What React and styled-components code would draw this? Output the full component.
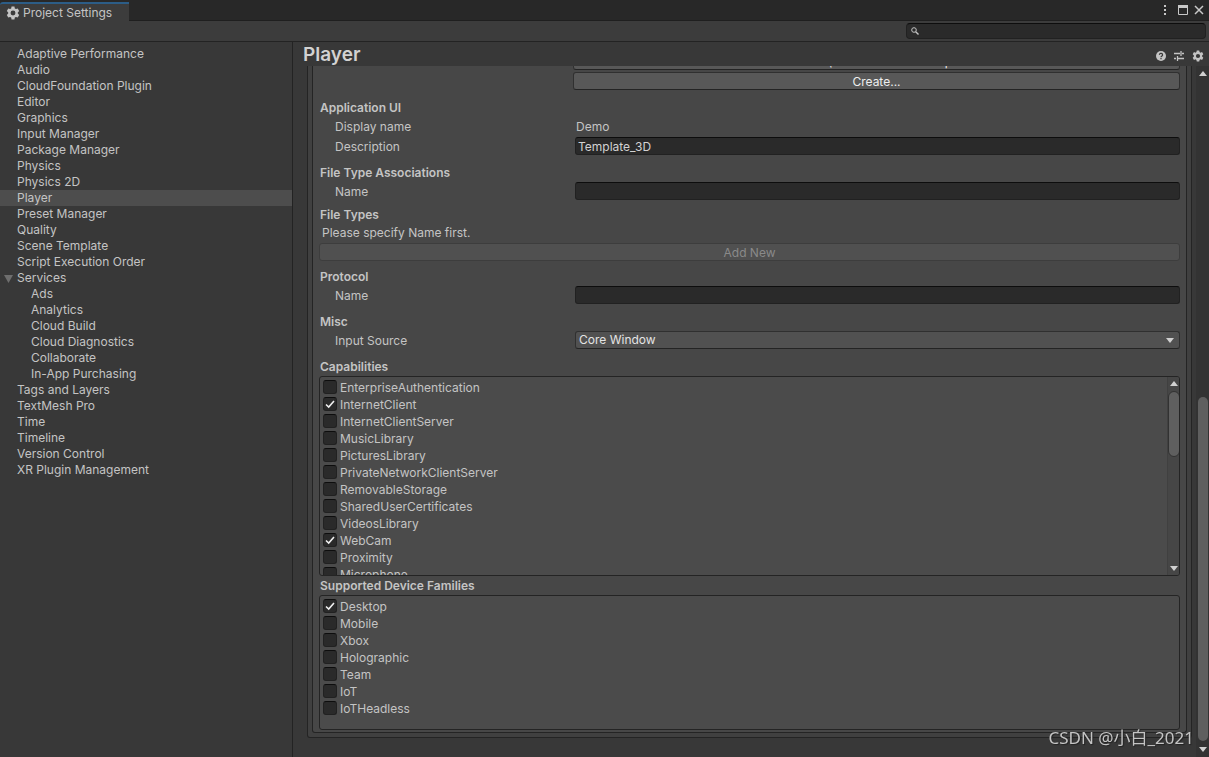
import { useState } from 'react';
import styled, { createGlobalStyle } from 'styled-components';

const navItems = [
  { name: 'Adaptive Performance' },
  { name: 'Audio' },
  { name: 'CloudFoundation Plugin' },
  { name: 'Editor' },
  { name: 'Graphics' },
  { name: 'Input Manager' },
  { name: 'Package Manager' },
  { name: 'Physics' },
  { name: 'Physics 2D' },
  { name: 'Player' },
  { name: 'Preset Manager' },
  { name: 'Quality' },
  { name: 'Scene Template' },
  { name: 'Script Execution Order' },
  { name: 'Services', open: true },
  { name: 'Ads', child: true },
  { name: 'Analytics', child: true },
  { name: 'Cloud Build', child: true },
  { name: 'Cloud Diagnostics', child: true },
  { name: 'Collaborate', child: true },
  { name: 'In-App Purchasing', child: true },
  { name: 'Tags and Layers' },
  { name: 'TextMesh Pro' },
  { name: 'Time' },
  { name: 'Timeline' },
  { name: 'Version Control' },
  { name: 'XR Plugin Management' },
];

const capabilities = [
  'EnterpriseAuthentication',
  'InternetClient',
  'InternetClientServer',
  'MusicLibrary',
  'PicturesLibrary',
  'PrivateNetworkClientServer',
  'RemovableStorage',
  'SharedUserCertificates',
  'VideosLibrary',
  'WebCam',
  'Proximity',
  'Microphone',
];

const families = ['Desktop', 'Mobile', 'Xbox', 'Holographic', 'Team', 'IoT', 'IoTHeadless'];

const GearIcon = ({ size }) => (
  <svg width={size} height={size} viewBox="0 0 24 24" fill="#c4c4c4">
    <path
      fillRule="evenodd"
      d="M9.500 1h5l.6 3.200 2 1.100 3-1.200 2.500 4.300L20.200 11v2l2.400 2.600-2.500 4.300-3-1.200-2 1.100-.6 3.200h-5l-.6-3.200-2-1.100-3 1.200-2.500-4.300L3.800 13v-2L1.400 8.400l2.500-4.300 3 1.200 2-1.100zM12 7.800a4.200 4.200 0 1 0 0 8.400 4.200 4.200 0 0 0 0-8.400z"
    />
  </svg>
);

const Arrow = ({ down }) => (
  <svg width="8" height="5" viewBox="0 0 8 5">
    <path d={down ? 'M0 0h8L4 5z' : 'M0 5h8L4 0z'} fill="#d0d0d0" />
  </svg>
);

const CheckList = ({ items, defaultChecked }) => {
  const [checked, setChecked] = useState(defaultChecked);

  const toggle = (item) => {
    setChecked(
      checked.includes(item) ? checked.filter((c) => c !== item) : [...checked, item]
    );
  };

  return (
    <List>
      {items.map((item) => (
        <CheckRow key={item}>
          <Checkbox checked={checked.includes(item)} onChange={() => toggle(item)} />
          {item}
        </CheckRow>
      ))}
    </List>
  );
};

const Checkbox = ({ checked, onChange }) => (
  <CheckWrap>
    <CheckInput type="checkbox" checked={checked} onChange={onChange} />
    {checked && (
      <CheckMark viewBox="0 0 14 14">
        <path d="M3 7.500L5.700 10L11 4" fill="none" stroke="#efefef" strokeWidth="1.600" />
      </CheckMark>
    )}
  </CheckWrap>
);

const App = () => {
  const [active, setActive] = useState('Player');
  const [description, setDescription] = useState('Template_3D');

  return (
    <Window>
      <GlobalStyle />
      <TitleBar>
        <Tab>
          <GearIcon size={14} />
          Project Settings
        </Tab>
        <WindowButtons>
          <IconButton aria-label="Menu">
            <svg width="14" height="12" viewBox="0 0 14 12" fill="#c8c8c8">
              <path d="M6 1h2v2H6zM6 5h2v2H6zM6 9h2v2H6z" />
            </svg>
          </IconButton>
          <IconButton aria-label="Maximize">
            <svg width="10" height="10" viewBox="0 0 10 10">
              <path d="M.5.500h9v9h-9z" fill="none" stroke="#c8c8c8" />
              <path d="M0 0h10v3H0z" fill="#c8c8c8" />
            </svg>
          </IconButton>
          <IconButton aria-label="Close">
            <svg width="10" height="10" viewBox="0 0 10 10">
              <path d="M1 1l8 8M9 1l-8 8" stroke="#c8c8c8" strokeWidth="1.500" />
            </svg>
          </IconButton>
        </WindowButtons>
      </TitleBar>

      <Toolbar>
        <SearchBox>
          <svg width="8" height="8" viewBox="0 0 8 8" fill="none" stroke="#c4c4c4">
            <circle cx="3" cy="3" r="2.300" />
            <path d="M4.700 4.700L7.500 7.500" strokeWidth="1.400" />
          </svg>
          <SearchInput type="text" aria-label="Search" />
        </SearchBox>
      </Toolbar>

      <Body>
        <Sidebar>
          {navItems.map((item) => (
            <NavItem
              key={item.name}
              $child={item.child}
              $active={item.name === active}
              onClick={() => setActive(item.name)}
            >
              <Foldout>
                {item.open && (
                  <svg width="9" height="8" viewBox="0 0 9 8">
                    <path d="M0 0h9L4.500 8z" fill="#6e6e6e" />
                  </svg>
                )}
              </Foldout>
              {item.name}
            </NavItem>
          ))}
        </Sidebar>

        <Main>
          <Header>
            <h1>{active}</h1>
            <HeaderIcons>
              <IconButton aria-label="Help">
                <svg width="10" height="10" viewBox="0 0 10 10">
                  <circle cx="5" cy="5" r="5" fill="#c4c4c4" />
                  <path
                    d="M3.400 3.900a1.600 1.500 0 1 1 2.400 1.200Q5 5.500 5 6.200M5 7v1.300"
                    fill="none"
                    stroke="#383838"
                    strokeWidth="1.200"
                  />
                </svg>
              </IconButton>
              <IconButton aria-label="Presets">
                <svg width="10" height="10" viewBox="0 0 10 10" stroke="#c4c4c4" fill="none">
                  <path d="M0 2.500h6M8 2.500h2M7 0v5" strokeWidth="1.300" />
                  <path d="M0 7.500h2M4 7.500h6M3.500 5v5" strokeWidth="1.300" />
                </svg>
              </IconButton>
              <IconButton aria-label="Settings">
                <GearIcon size={12} />
              </IconButton>
            </HeaderIcons>
          </Header>

          <ScrollArea>
            <Content>
              <OuterBox>
                <InnerBox>
                  <ValueColumn>
                    <Button>Assets\WSATestCertificate.pfx</Button>
                    <Button>Create...</Button>
                  </ValueColumn>

                  <Section>
                    <h2>Application UI</h2>
                    <Row>
                      <span>Display name</span>
                      <Plain>Demo</Plain>
                    </Row>
                    <Row>
                      <label htmlFor="description">Description</label>
                      <TextInput
                        id="description"
                        type="text"
                        value={description}
                        onChange={(e) => setDescription(e.target.value)}
                      />
                    </Row>
                  </Section>

                  <Section>
                    <h2>File Type Associations</h2>
                    <Row>
                      <label htmlFor="fileName">Name</label>
                      <TextInput id="fileName" type="text" />
                    </Row>
                  </Section>

                  <Section $gap={7}>
                    <h2>File Types</h2>
                    <p>Please specify Name first.</p>
                    <Button disabled>Add New</Button>
                  </Section>

                  <Section $gap={8}>
                    <h2>Protocol</h2>
                    <Row>
                      <label htmlFor="protocolName">Name</label>
                      <TextInput id="protocolName" type="text" />
                    </Row>
                  </Section>

                  <Section>
                    <h2>Misc</h2>
                    <Row>
                      <label htmlFor="inputSource">Input Source</label>
                      <SelectWrap>
                        <Select id="inputSource">
                          <option>Core Window</option>
                        </Select>
                        <SelectArrow>
                          <Arrow down />
                        </SelectArrow>
                      </SelectWrap>
                    </Row>
                  </Section>

                  <Section>
                    <h2>Capabilities</h2>
                    <ListBox $height={200}>
                      <CheckList
                        items={capabilities}
                        defaultChecked={['InternetClient', 'WebCam']}
                      />
                      <ListScroll>
                        <Arrow />
                        <ListThumb />
                        <Arrow down />
                      </ListScroll>
                    </ListBox>
                  </Section>

                  <Section $gap={2}>
                    <h2>Supported Device Families</h2>
                    <ListBox $height={135}>
                      <CheckList items={families} defaultChecked={['Desktop']} />
                    </ListBox>
                  </Section>
                </InnerBox>
              </OuterBox>
            </Content>
            <PageScroll>
              <Arrow />
              <PageThumb />
              <Arrow down />
            </PageScroll>
          </ScrollArea>
        </Main>
      </Body>
      <Watermark>CSDN @小白_2021</Watermark>
    </Window>
  );
};

export default App;

const GlobalStyle = createGlobalStyle`
  * {
    box-sizing: border-box;
  }
  body {
    margin: 0;
    background: #383838;
  }
  body, button, input, select {
    font-family: Inter, sans-serif;
    font-size: 12px;
    line-height: 16px;
    color: #c4c4c4;
  }
  h1, h2, p {
    margin: 0;
  }
  svg {
    display: block;
    flex: none;
  }
`;
const Window = styled.div`
  display: flex;
  flex-direction: column;
  height: 100vh;
  overflow: hidden;
  background: #383838;
`;
const TitleBar = styled.header`
  display: flex;
  justify-content: space-between;
  height: 21px;
  flex: none;
  padding-top: 2px;
  background: #282828;
  border-bottom: 1px solid #1f1f1f;
`;
const Tab = styled.div`
  display: flex;
  align-items: center;
  gap: 3px;
  height: 19px;
  padding: 0 17px 0 6px;
  background: #3c3c3c;
  border-top: 2px solid #2c5d87;
  border-top-left-radius: 3px;
`;
const WindowButtons = styled.div`
  display: flex;
  align-items: center;
  gap: 6px;
  padding: 0 5px 2px 0;
`;
const IconButton = styled.button`
  padding: 0;
  border: 0;
  background: none;
`;
const Toolbar = styled.div`
  display: flex;
  justify-content: flex-end;
  align-items: center;
  height: 21px;
  flex: none;
  padding-right: 3px;
  background: #3c3c3c;
  border-bottom: 1px solid #232323;
`;
const SearchBox = styled.div`
  display: flex;
  align-items: center;
  gap: 4px;
  width: 300px;
  height: 16px;
  padding-left: 4px;
  background: #2a2a2a;
  border: 1px solid #212121;
  border-top-color: #0d0d0d;
  border-radius: 4px;
`;
const SearchInput = styled.input`
  flex: 1;
  height: 14px;
  padding: 0;
  border: 0;
  outline: none;
  background: none;
`;
const Body = styled.div`
  display: flex;
  flex: 1;
  min-height: 0;
`;
const Sidebar = styled.nav`
  width: 293px;
  flex: none;
  padding-top: 4px;
  border-right: 1px solid #232323;
`;
const NavItem = styled.button`
  display: flex;
  align-items: center;
  width: 100%;
  height: 16px;
  padding: 0;
  padding-left: ${(props) => (props.$child ? '14px' : '0')};
  border: 0;
  text-align: left;
  background: ${(props) => (props.$active ? '#4d4d4d' : 'none')};
`;
const Foldout = styled.span`
  width: 17px;
  padding: 1px 0 0 4px;
`;
const Main = styled.main`
  display: flex;
  flex-direction: column;
  flex: 1;
  min-width: 0;
`;
const Header = styled.div`
  display: flex;
  justify-content: space-between;
  height: 24px;
  flex: none;
  padding: 2px 5px 0 10px;
  h1 {
    font-size: 19px;
    line-height: 22px;
    font-weight: 600;
    color: #d2d2d2;
  }
`;
const HeaderIcons = styled.div`
  display: flex;
  align-items: center;
  gap: 8px;
  padding-top: 2px;
`;
const ScrollArea = styled.div`
  display: flex;
  flex: 1;
  min-height: 0;
`;
/* scrolled to the end, so the first rows run out at the top */
const Content = styled.div`
  display: flex;
  flex-direction: column;
  justify-content: flex-end;
  flex: 1;
  min-width: 0;
  overflow: hidden;
  padding: 0 4px 19px 14px;
`;
const OuterBox = styled.div`
  padding: 0 4px 4px;
  background: #404040;
  border: 1px solid #242424;
  border-top: 0;
  border-radius: 3px;
`;
const InnerBox = styled.div`
  padding: 0 6px 2px;
  background: #474747;
  border: 1px solid #242424;
  border-top: 0;
  border-radius: 3px;
`;
const ValueColumn = styled.div`
  display: grid;
  gap: 2px;
  padding-left: 254px;
`;
const Button = styled.button`
  display: block;
  width: 100%;
  height: 18px;
  padding: 1px 0 0;
  line-height: 16px;
  color: #eee;
  background: #585858;
  border: 1px solid #303030;
  border-bottom-color: #242424;
  border-radius: 3px;
  &:disabled {
    color: #8a8a8a;
    background: #505050;
    border-color: #3d3d3d;
  }
`;
const Section = styled.section`
  margin-top: ${(props) => props.$gap ?? 10}px;
  h2 {
    margin-bottom: 1px;
    padding-left: 1px;
    font-size: 12px;
    line-height: 16px;
    font-weight: 600;
  }
  p {
    margin-bottom: 2px;
    padding: 1px 0 0 3px;
  }
`;
const Row = styled.div`
  display: grid;
  grid-template-columns: 240px 1fr;
  height: 18px;
  padding-left: 16px;
  line-height: 20px;
  & + & {
    margin-top: 2px;
  }
`;
const Plain = styled.span`
  padding-left: 1px;
`;
const TextInput = styled.input`
  width: 100%;
  height: 18px;
  padding: 0 2px;
  outline: none;
  color: #d2d2d2;
  background: #2a2a2a;
  border: 1px solid #212121;
  border-top-color: #0d0d0d;
  border-radius: 3px;
`;
const SelectWrap = styled.div`
  position: relative;
`;
const Select = styled.select`
  display: block;
  width: 100%;
  height: 18px;
  padding: 0 3px;
  appearance: none;
  outline: none;
  color: #e4e4e4;
  background: #515151;
  border: 1px solid #303030;
  border-bottom-color: #242424;
  border-radius: 3px;
`;
const SelectArrow = styled.span`
  position: absolute;
  top: 7px;
  right: 6px;
  pointer-events: none;
`;
const ListBox = styled.div`
  display: flex;
  height: ${(props) => props.$height}px;
  overflow: hidden;
  background: #4b4b4b;
  border: 1px solid #242424;
  border-radius: 3px;
`;
const List = styled.div`
  flex: 1;
  padding: 3px;
`;
const CheckRow = styled.label`
  display: flex;
  gap: 3px;
  height: 17px;
`;
const CheckWrap = styled.span`
  position: relative;
  width: 14px;
  height: 14px;
`;
const CheckInput = styled.input`
  display: block;
  width: 14px;
  height: 14px;
  margin: 0;
  appearance: none;
  background: #2a2a2a;
  border: 1px solid #212121;
  border-top-color: #0d0d0d;
  border-radius: 3px;
`;
const CheckMark = styled.svg`
  position: absolute;
  inset: 0;
  pointer-events: none;
`;
const ListScroll = styled.div`
  display: flex;
  flex-direction: column;
  align-items: center;
  width: 12px;
  padding: 4px 0;
  background: #464646;
  border-left: 1px solid #404040;
`;
const ListThumb = styled.div`
  width: 12px;
  height: 66px;
  margin: 5px 0 auto;
  background: #5f5f5f;
  border: 1px solid #323232;
  border-radius: 6px;
`;
const PageScroll = styled.div`
  display: flex;
  flex-direction: column;
  align-items: center;
  width: 13px;
  flex: none;
  padding: 5px 0;
  background: #333;
`;
const PageThumb = styled.div`
  width: 10px;
  height: 344px;
  margin: auto 0 6px;
  background: #5f5f5f;
  border-radius: 5px;
`;
const Watermark = styled.div`
  position: fixed;
  right: 15px;
  bottom: 8px;
  font-family: 'Noto Sans', 'Noto Sans CJK SC', sans-serif;
  font-size: 17px;
  line-height: 22px;
  color: #c4c4c4;
  text-shadow: 1px 1px 1px #222;
`;
